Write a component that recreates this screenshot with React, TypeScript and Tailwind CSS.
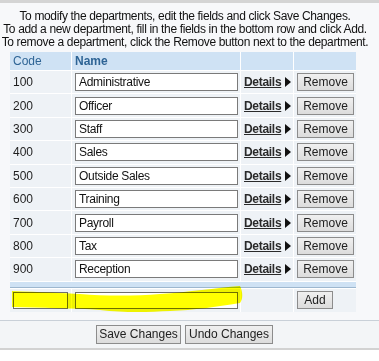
import React from 'react'

const departments = [
  { code: '100', name: 'Administrative' },
  { code: '200', name: 'Officer' },
  { code: '300', name: 'Staff' },
  { code: '400', name: 'Sales' },
  { code: '500', name: 'Outside Sales' },
  { code: '600', name: 'Training' },
  { code: '700', name: 'Payroll' },
  { code: '800', name: 'Tax' },
  { code: '900', name: 'Reception' },
]

function Arrow() {
  return (
    <svg width="6" height="10" viewBox="0 0 6 10" className="ml-[4px]">
      <polygon points="0,0 6,5 0,10" fill="#111" />
    </svg>
  )
}

function Btn({ children, className = '' }: { children: React.ReactNode; className?: string }) {
  return (
    <button
      className={
        'h-[18px] border border-[#8c8c8c] bg-gradient-to-b from-[#f0f0f0] to-[#dcdcdc] text-[12px] leading-none text-[#222] ' +
        className
      }
    >
      {children}
    </button>
  )
}

export default function App() {
  return (
    <div className="relative w-[379px] h-[361px] bg-white font-['Liberation_Sans',Arial,sans-serif] text-[11px] text-[#1e1e1e]">
      <div className="border-t-[3px] border-[#d4d4d4] bg-[#f7f8fa]">
        {/* Instructions */}
        <div className="w-[370px] pt-[7px] text-center text-[12px] leading-[13px] tracking-[-0.35px] text-[#111]">
          <p>To modify the departments, edit the fields and click Save Changes.</p>
          <p>To add a new department, fill in the fields in the bottom row and click Add.</p>
          <p>To remove a department, click the Remove button next to the department.</p>
        </div>

        {/* Table */}
        <div className="mt-[3px] ml-[10px] w-[346px] grid grid-cols-[61px_168px_52px_62px] gap-px bg-white">
          <div className="h-[18px] bg-[#cfe2f4] pl-[3px] flex items-center text-[12px] text-[#2e6495]">Code</div>
          <div className="h-[18px] bg-[#cfe2f4] pl-[3px] flex items-center text-[12px] font-bold text-[#2e6495]">Name</div>
          <div className="h-[18px] bg-[#cfe2f4]" />
          <div className="h-[18px] bg-[#cfe2f4]" />

          {departments.map((d) => (
            <React.Fragment key={d.code}>
              <div className="h-[22.4px] bg-[#eef2f6] pl-[3px] flex items-center text-[12px]">{d.code}</div>
              <div className="h-[22.4px] bg-[#eef2f6] pl-[3px] flex items-center">
                <div className="w-[163px] h-[18px] border border-[#7a7a7a] bg-white pl-[3px] flex items-center text-[12px] tracking-[-0.3px] text-[#111]">
                  {d.name}
                </div>
              </div>
              <div className="h-[22.4px] bg-[#eef2f6] pl-[3px] flex items-center">
                <span className="font-bold underline text-[12px] tracking-[-0.3px] text-[#2a2a2a]">Details</span>
                <Arrow />
              </div>
              <div className="h-[22.4px] bg-[#eef2f6] pl-[3px] flex items-center">
                <Btn className="w-[57px]">Remove</Btn>
              </div>
            </React.Fragment>
          ))}

          <div className="col-span-4 h-[6px] bg-[#cfe2f4] border-b border-[#9db7cf]" />

          <div className="h-[23px] bg-[#eef2f6] pl-[3px] flex items-center">
            <div className="w-[55px] h-[17px] border border-[#6e6e6e] bg-white" />
          </div>
          <div className="h-[23px] bg-[#eef2f6] pl-[3px] flex items-center">
            <div className="w-[163px] h-[17px] border border-[#6e6e6e] bg-white" />
          </div>
          <div className="h-[23px] bg-[#eef2f6]" />
          <div className="h-[23px] bg-[#eef2f6] pl-[3px] flex items-center">
            <Btn className="w-[36px]">Add</Btn>
          </div>
        </div>

        {/* Footer */}
        <div className="mt-[8px] h-[30px] border-t border-[#c9d0d8] border-b-2 border-b-[#d2d2d2] bg-[#f3f5f7] flex items-center pl-[96px] gap-[4px]">
          <Btn className="w-[85px] h-[19px]">Save Changes</Btn>
          <Btn className="w-[88px] h-[19px]">Undo Changes</Btn>
        </div>
      </div>

      {/* highlighter mark */}
      <svg
        className="absolute left-0 top-0 pointer-events-none mix-blend-multiply"
        width="379"
        height="361"
        viewBox="0 0 379 361"
      >
        <path
          d="M12,291 C40,292 65,293 80,294 C105,296 135,296 160,294 C190,292 215,288 240,286 C243,292 243,299 240,303 C215,307 195,310 170,311 C150,312 125,313 100,310 C75,308 40,308 12,307 Z"
          fill="#ffff00"
        />
      </svg>
    </div>
  )
}
